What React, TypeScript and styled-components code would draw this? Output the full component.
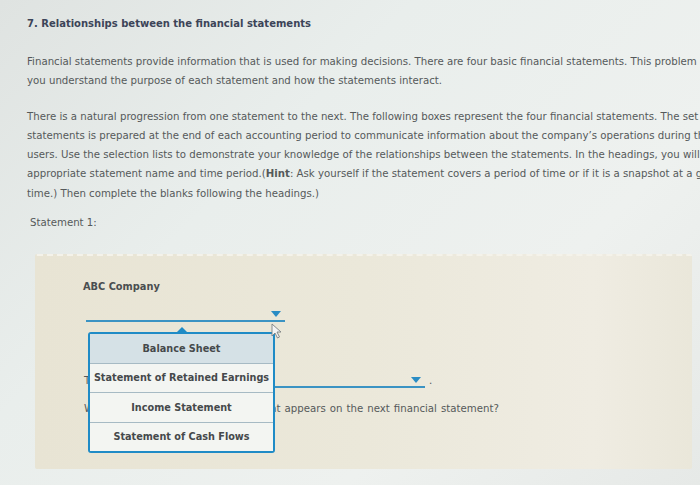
import React from "react";
import styled, { createGlobalStyle } from "styled-components";

const GlobalStyle = createGlobalStyle`
  html, body {
    margin: 0;
    padding: 0;
    background: #e9edeb;
  }
`;

const Page = styled.div`
  position: relative;
  width: 700px;
  height: 485px;
  overflow: hidden;
  box-sizing: border-box;
  padding: 17px 0 0 27px;
  background: linear-gradient(135deg, #dfe3e1 0%, #e9eeec 35%, #eef1ef 70%, #e6e9e7 100%);
  font-family: "DejaVu Sans", Verdana, sans-serif;
  color: #55595a;
`;

const Title = styled.h1`
  margin: 0;
  font-size: 10px;
  line-height: 14px;
  font-weight: bold;
  color: #3c4458;
  white-space: nowrap;
`;

const Paragraph = styled.div<{ $top: number }>`
  margin-top: ${({ $top }) => $top}px;
  font-size: 10.2px;
  line-height: 19.3px;
`;

const Line = styled.div`
  white-space: nowrap;
`;

const Label = styled.div`
  margin-top: 10px;
  font-size: 10.2px;
  line-height: 19px;
  padding-left: 3px;
`;

const Panel = styled.div`
  position: relative;
  margin: 22px 0 0 8px;
  width: 657px;
  height: 215px;
  box-sizing: border-box;
  padding: 23px 0 0 48px;
  background: linear-gradient(90deg, #e8e4d4 0%, #ebe8da 50%, #efece2 85%, #eae7da 100%);
  border-top: 2px dashed #f4f2ea;
  border-radius: 2px;
`;

const Company = styled.div`
  font-size: 9.8px;
  font-weight: bold;
  color: #4a4e50;
  line-height: 16px;
`;

const Select = styled.div<{ $width: number }>`
  position: relative;
  width: ${({ $width }) => $width}px;
  height: 12px;
  border-bottom: 2px solid #3b93c3;
`;

const Arrow = styled.span`
  position: absolute;
  right: 4px;
  top: 3px;
  width: 0;
  height: 0;
  border-left: 5px solid transparent;
  border-right: 5px solid transparent;
  border-top: 6px solid #2a8cc4;
`;

const FirstSelect = styled.div`
  margin-top: 13px;
  margin-left: 3px;
`;

const Row = styled.div`
  display: flex;
  align-items: flex-end;
  gap: 4px;
  margin-top: 52px;
  margin-left: 1px;
  font-size: 10.2px;
  line-height: 14px;
`;

const Question = styled.div`
  margin-top: 14px;
  margin-left: 1px;
  font-size: 10.2px;
  line-height: 14px;
  white-space: nowrap;
  word-spacing: 0.8px;
`;

const Popup = styled.ul`
  position: absolute;
  left: 53px;
  top: 76px;
  width: 187px;
  margin: 0;
  padding: 0;
  list-style: none;
  box-sizing: border-box;
  border: 2px solid #1f8bc6;
  border-radius: 3px;
  background: #f3f5f2;

  &::before {
    content: "";
    position: absolute;
    left: 86px;
    top: -7px;
    border-left: 6px solid transparent;
    border-right: 6px solid transparent;
    border-bottom: 6px solid #1f8bc6;
  }
`;

const Option = styled.li<{ $active?: boolean }>`
  height: 28.5px;
  display: flex;
  align-items: center;
  justify-content: center;
  font-size: 9.7px;
  font-weight: bold;
  color: #45494b;
  background: ${({ $active }) => ($active ? "#d5e1e6" : "#f3f5f2")};
  border-top: 1px solid #a6bac4;

  &:first-child {
    border-top: none;
  }
`;

const Cursor = styled.svg`
  position: absolute;
  left: 236px;
  top: 67px;
  width: 11px;
  height: 16px;
`;

const options = [
  "Balance Sheet",
  "Statement of Retained Earnings",
  "Income Statement",
  "Statement of Cash Flows",
];

const App = () => {
  return (
    <Page>
      <GlobalStyle />
      <Title>7. Relationships between the financial statements</Title>
      <Paragraph $top={21}>
        <Line>
          Financial statements provide information that is used for making decisions. There are four basic financial statements. This problem helps
        </Line>
        <Line>you understand the purpose of each statement and how the statements interact.</Line>
      </Paragraph>
      <Paragraph $top={16}>
        <Line>
          There is a natural progression from one statement to the next. The following boxes represent the four financial statements. The set of financial
        </Line>
        <Line>
          statements is prepared at the end of each accounting period to communicate information about the company’s operations during that period to
        </Line>
        <Line>
          users. Use the selection lists to demonstrate your knowledge of the relationships between the statements. In the headings, you will need to select the
        </Line>
        <Line>
          appropriate statement name and time period.(<b>Hint</b>: Ask yourself if the statement covers a period of time or if it is a snapshot at a given point in
        </Line>
        <Line>time.) Then complete the blanks following the headings.)</Line>
      </Paragraph>
      <Label>Statement 1:</Label>

      <Panel>
        <Company>ABC Company</Company>
        <FirstSelect>
          <Select $width={199}>
            <Arrow />
          </Select>
        </FirstSelect>
        <Row>
          <span>The</span>
          <Select $width={318}>
            <Arrow />
          </Select>
          <span>.</span>
        </Row>
        <Question>What information from this statement appears on the next financial statement?</Question>

        <Popup>
          {options.map((o, i) => (
            <Option key={o} $active={i === 0}>
              {o}
            </Option>
          ))}
        </Popup>

        <Cursor viewBox="0 0 11 16">
          <path d="M1 1 L1 13 L4 10 L6.5 15 L8.5 14 L6 9 L10 9 Z" fill="#f4f4f4" stroke="#7b7f82" strokeWidth="0.9" strokeLinejoin="round" />
        </Cursor>
      </Panel>
    </Page>
  );
};

export default App;
